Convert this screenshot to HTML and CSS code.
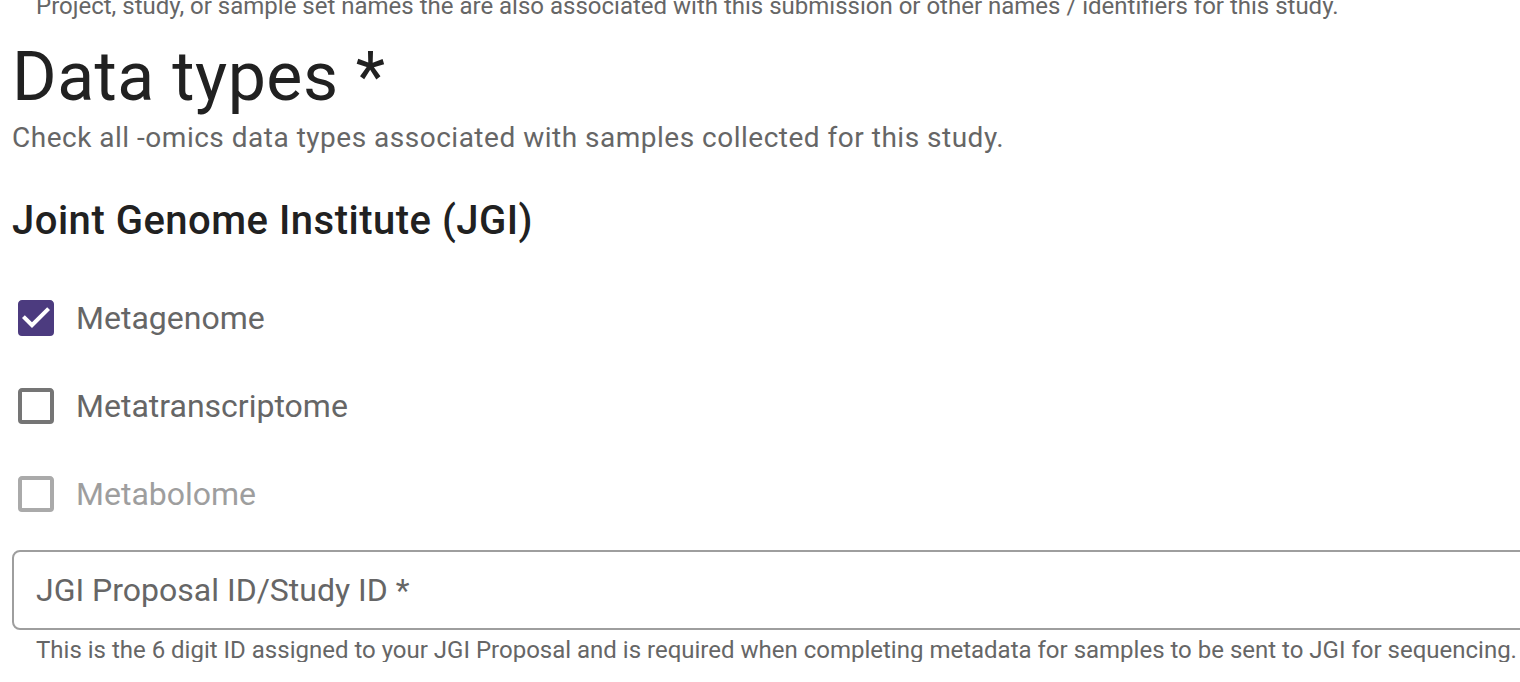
FILE: index.html
```html
<!DOCTYPE html>
<html lang="en">
<head>
    <meta charset="UTF-8">
    <title>Study Form - Data types</title>
    <link rel="stylesheet" href="styles.css">
</head>
<body>
    <div class="form">
        <p class="hint top-hint">Project, study, or sample set names the are also associated with this submission or other names / identifiers for this study.</p>

        <h2 class="section-title">Data types *</h2>
        <p class="section-subtitle">Check all -omics data types associated with samples collected for this study.</p>

        <h3 class="group-title">Joint Genome Institute (JGI)</h3>

        <div class="checkbox-list">
            <label class="checkbox checked">
                <svg class="box" viewBox="0 0 24 24"><path d="M19,3H5C3.89,3 3,3.89 3,5V19A2,2 0 0,0 5,21H19A2,2 0 0,0 21,19V5C21,3.89 20.1,3 19,3M10,17L5,12L6.41,10.58L10,14.17L17.59,6.58L19,8L10,17Z"/></svg>
                <span>Metagenome</span>
            </label>
            <label class="checkbox">
                <svg class="box" viewBox="0 0 24 24"><path d="M19,3H5C3.89,3 3,3.89 3,5V19A2,2 0 0,0 5,21H19A2,2 0 0,0 21,19V5C21,3.89 20.1,3 19,3M19,5V19H5V5H19Z"/></svg>
                <span>Metatranscriptome</span>
            </label>
            <label class="checkbox disabled">
                <svg class="box" viewBox="0 0 24 24"><path d="M19,3H5C3.89,3 3,3.89 3,5V19A2,2 0 0,0 5,21H19A2,2 0 0,0 21,19V5C21,3.89 20.1,3 19,3M19,5V19H5V5H19Z"/></svg>
                <span>Metabolome</span>
            </label>
        </div>

        <div class="text-field">
            <span class="field-label">JGI Proposal ID/Study ID *</span>
        </div>
        <p class="hint">This is the 6 digit ID assigned to your JGI Proposal and is required when completing metadata for samples to be sent to JGI for sequencing.</p>
    </div>
</body>
</html>
```

FILE: styles.css
```css
* {
    margin: 0;
    padding: 0;
    box-sizing: border-box;
}

body {
    font-family: Roboto, 'Liberation Sans', sans-serif;
    background: #fff;
    color: #212121;
    overflow: hidden;
}

.form {
    width: 1540px;
    padding-left: 12px;
}

.hint {
    font-size: 24px;
    line-height: 24px;
    color: #666;
    padding-left: 24px;
    white-space: nowrap;
}

.top-hint {
    margin-top: -6px;
}

.section-title {
    font-size: 68px;
    font-weight: 400;
    line-height: 80px;
    letter-spacing: 0.0074em;
    margin-top: 19px;
}

.section-subtitle {
    font-size: 28px;
    line-height: 40px;
    letter-spacing: 0.018em;
    color: #666;
    margin-top: 1px;
}

.group-title {
    font-size: 40px;
    font-weight: 500;
    line-height: 64px;
    letter-spacing: 0.0125em;
    margin-top: 31px;
}

.checkbox-list {
    display: flex;
    flex-direction: column;
    gap: 40px;
    margin-top: 41px;
}

.checkbox {
    display: flex;
    align-items: center;
    gap: 16px;
    height: 48px;
    font-size: 32px;
    line-height: 48px;
    color: #666;
}

.checkbox .box {
    width: 48px;
    height: 48px;
    fill: #757575;
}

.checkbox.checked .box {
    fill: #4c3b7f;
}

.checkbox.disabled {
    color: #9e9e9e;
}

.checkbox.disabled .box {
    fill: #aaa;
}

.text-field {
    display: flex;
    align-items: center;
    height: 80px;
    margin-top: 32px;
    padding: 0 22px;
    border: 2px solid #9e9e9e;
    border-radius: 8px;
    margin-bottom: 8px;
}

.field-label {
    font-size: 32px;
    color: #666;
}
```
